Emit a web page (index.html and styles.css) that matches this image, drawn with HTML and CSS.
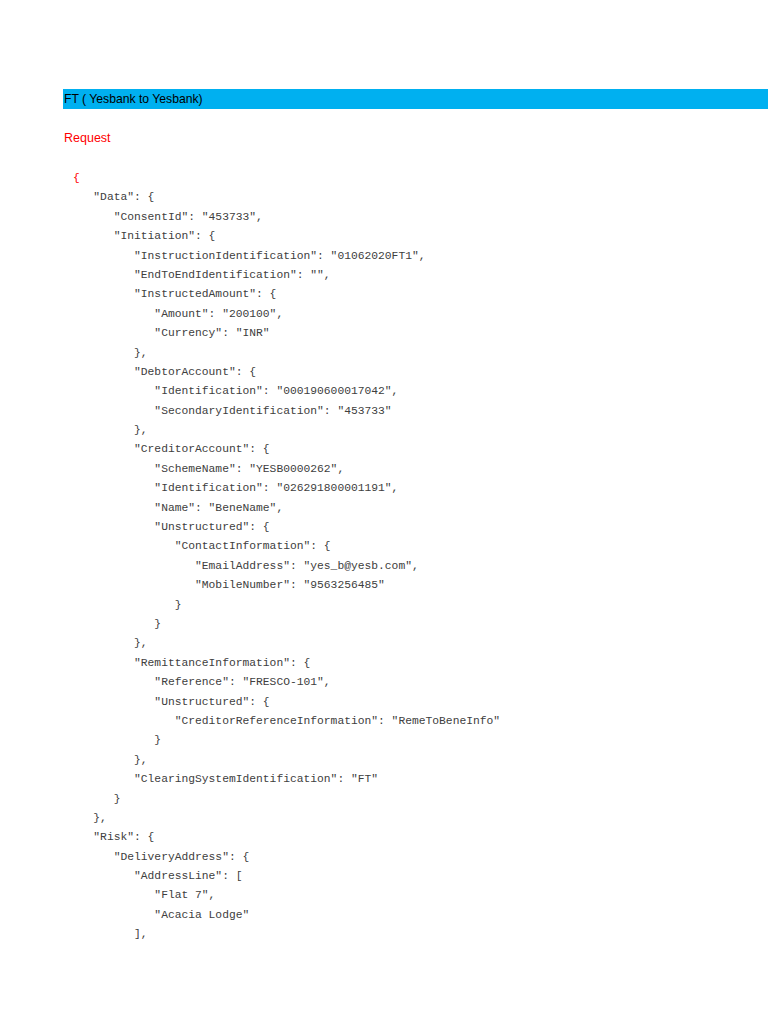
FILE: index.html
```html
<!DOCTYPE html>
<html>
<head>
<meta charset="utf-8">
<link rel="stylesheet" href="styles.css">
</head>
<body>
<div class="page">
  <div class="title-bar">FT ( Yesbank to Yesbank)</div>
  <div class="label">Request</div>
<pre class="code"><span class="brace">{</span>
   "Data": {
      "ConsentId": "453733",
      "Initiation": {
         "InstructionIdentification": "01062020FT1",
         "EndToEndIdentification": "",
         "InstructedAmount": {
            "Amount": "200100",
            "Currency": "INR"
         },
         "DebtorAccount": {
            "Identification": "000190600017042",
            "SecondaryIdentification": "453733"
         },
         "CreditorAccount": {
            "SchemeName": "YESB0000262",
            "Identification": "026291800001191",
            "Name": "BeneName",
            "Unstructured": {
               "ContactInformation": {
                  "EmailAddress": "yes_b@yesb.com",
                  "MobileNumber": "9563256485"
               }
            }
         },
         "RemittanceInformation": {
            "Reference": "FRESCO-101",
            "Unstructured": {
               "CreditorReferenceInformation": "RemeToBeneInfo"
            }
         },
         "ClearingSystemIdentification": "FT"
      }
   },
   "Risk": {
      "DeliveryAddress": {
         "AddressLine": [
            "Flat 7",
            "Acacia Lodge"
         ],</pre>
</div>
</body>
</html>
```

FILE: styles.css
```css
html, body {
  margin: 0;
  padding: 0;
  background: #ffffff;
}

.page {
  padding-top: 89px;
  padding-left: 63px;
}

.title-bar {
  background: #00b0f0;
  color: #000000;
  font-family: "Liberation Sans", Arial, sans-serif;
  font-size: 12.2px;
  height: 20px;
  line-height: 20px;
  padding-left: 1px;
}

.label {
  color: #ff0000;
  font-family: "Liberation Sans", Arial, sans-serif;
  font-size: 12.5px;
  margin-top: 19px;
  line-height: 20px;
  padding-left: 1px;
}

.code {
  margin: 21px 0 0 10px;
  font-family: "Liberation Mono", "Courier New", monospace;
  font-size: 11.3px;
  line-height: 19.385px;
  color: #404040;
  white-space: pre;
}

.brace {
  color: #ff0000;
}
```
